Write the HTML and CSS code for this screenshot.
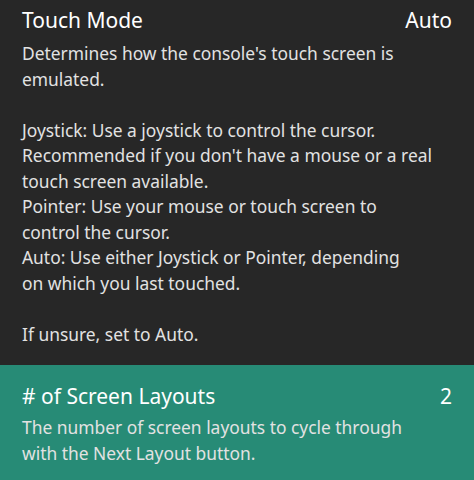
FILE: index.html
```html
<!DOCTYPE html>
<html>
<head>
<meta charset="utf-8">
<link rel="stylesheet" href="styles.css">
</head>
<body>
<div class="list">
  <div class="item">
    <div class="head">
      <span class="title">Touch Mode</span>
      <span class="value">Auto</span>
    </div>
    <p class="desc">Determines how the console's touch screen is<br>emulated.<br><br>Joystick: Use a joystick to control the cursor.<br>Recommended if you don't have a mouse or a real<br>touch screen available.<br>Pointer: Use your mouse or touch screen to<br>control the cursor.<br>Auto: Use either Joystick or Pointer, depending<br>on which you last touched.<br><br>If unsure, set to Auto.</p>
  </div>
  <div class="item selected">
    <div class="head">
      <span class="title"># of Screen Layouts</span>
      <span class="value">2</span>
    </div>
    <p class="desc">The number of screen layouts to cycle through<br>with the Next Layout button.</p>
  </div>
</div>
</body>
</html>
```
FILE: styles.css
```css
html, body {
  margin: 0;
  padding: 0;
  background: #272727;
  width: 474px;
  height: 480px;
  overflow: hidden;
}
body {
  font-family: "Noto Sans", "DejaVu Sans", sans-serif;
}
.list {
  display: flex;
  flex-direction: column;
}
.item {
  padding: 6px 22px 18px 22px;
  background: #272727;
}
.item.selected {
  background: #278b76;
  padding-top: 17px;
}
.item.selected .desc {
  margin-top: 5px;
}
.head {
  display: flex;
  justify-content: space-between;
  align-items: baseline;
  font-size: 21px;
  line-height: 28px;
  color: #ffffff;
}
.desc {
  margin: 7px 0 0 0;
  font-size: 17.4px;
  line-height: 25.5px;
  color: #e2e2e2;
  white-space: nowrap;
}
```
